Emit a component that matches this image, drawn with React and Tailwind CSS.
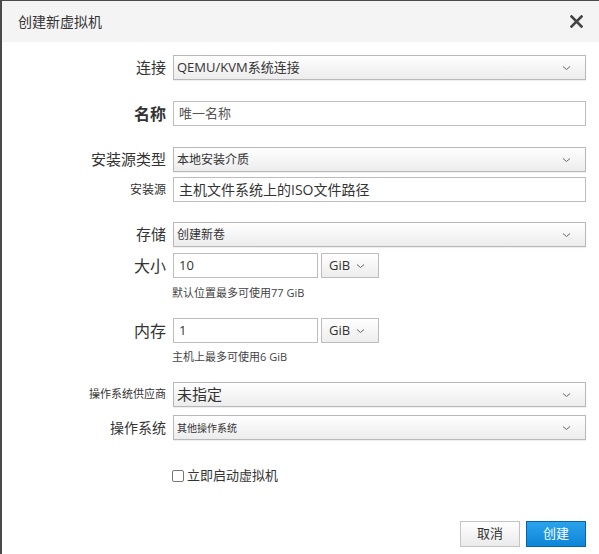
import { useState } from "react";

const font = { fontFamily: '"Open Sans", "Noto Sans CJK SC", sans-serif' };

function Chevron() {
  return (
    <svg className="w-[9px] h-[6px]" viewBox="0 0 9 6" fill="none" stroke="#666" strokeWidth="1">
      <path d="M1 1.5L4.5 4.5L8 1.5" />
    </svg>
  );
}

function Select({ children, textClass = "text-[13px]" }) {
  return (
    <div className="flex h-[25px] flex-1 items-center justify-between border border-[#b8b8b8] bg-gradient-to-b from-white to-[#ececec] pl-[3px] pr-[14px] shadow-[0_1px_1px_rgba(0,0,0,0.06)]">
      <span className={`${textClass} leading-none text-[#333]`}>{children}</span>
      <Chevron />
    </div>
  );
}

function Input({ value, className = "flex-1", textClass = "text-[13px]", muted }) {
  return (
    <div className={`flex h-[25px] items-center border border-[#bdbdbd] bg-white px-[5px] ${className}`}>
      <span className={`${textClass} leading-none ${muted ? "text-[#555]" : "text-[#333]"}`}>{value}</span>
    </div>
  );
}

function UnitButton() {
  return (
    <div className="ml-[3px] flex h-[25px] w-[58px] items-center gap-[6px] border border-[#bdbdbd] bg-gradient-to-b from-white to-[#ededed] pl-[7px]">
      <span className="text-[13px] leading-none text-[#333]">GiB</span>
      <Chevron />
    </div>
  );
}

function Row({ label, labelClass = "text-[15px]", mt, children }) {
  return (
    <div className={`flex items-center ${mt}`}>
      <div className={`w-[165px] shrink-0 pr-[1px] text-right text-[#333] ${labelClass}`}>{label}</div>
      <div className="ml-[6px] flex flex-1 items-center">{children}</div>
    </div>
  );
}

export default function App() {
  const [autostart, setAutostart] = useState(false);

  return (
    <div className="h-[554px] w-[599px] overflow-hidden border-l-2 border-t border-[#4a4a4a] bg-white" style={font}>
      <div className="flex h-[41px] items-center justify-between bg-[#f4f4f4] pl-[16px] pr-[16px]">
        <h2 className="text-[14px] text-[#333]">创建新虚拟机</h2>
        <svg className="h-[13px] w-[13px]" viewBox="0 0 13 13" stroke="#444" strokeWidth="2.6" strokeLinecap="square">
          <path d="M1.5 1.5L11.5 11.5M11.5 1.5L1.5 11.5" />
        </svg>
      </div>

      <div className="pr-[13px]">
        <Row label="连接" mt="mt-[13px]">
          <Select>QEMU/KVM系统连接</Select>
        </Row>
        <Row label="名称" labelClass="text-[16px] font-bold" mt="mt-[21px]">
          <Input value="唯一名称" muted />
        </Row>
        <Row label="安装源类型" mt="mt-[21px]">
          <Select textClass="text-[12px]">本地安装介质</Select>
        </Row>
        <Row label="安装源" labelClass="text-[12px]" mt="mt-[5px]">
          <Input value="主机文件系统上的ISO文件路径" textClass="text-[14px]" />
        </Row>
        <Row label="存储" mt="mt-[20px]">
          <Select textClass="text-[12px]">创建新卷</Select>
        </Row>
        <Row label="大小" labelClass="text-[16px]" mt="mt-[6px]">
          <Input value="10" className="w-[145px]" />
          <UnitButton />
        </Row>
        <div className="ml-[170px] mt-[7px] text-[11px] leading-[16px] text-[#444]">默认位置最多可使用77 GiB</div>
        <Row label="内存" labelClass="text-[16px]" mt="mt-[17px]">
          <Input value="1" className="w-[145px]" />
          <UnitButton />
        </Row>
        <div className="ml-[170px] mt-[6px] text-[11px] leading-[16px] text-[#444]">主机上最多可使用6 GiB</div>
        <Row label="操作系统供应商" labelClass="text-[11px]" mt="mt-[17px]">
          <Select textClass="text-[15px]">未指定</Select>
        </Row>
        <Row label="操作系统" labelClass="text-[14px]" mt="mt-[8px]">
          <Select textClass="text-[10px]">其他操作系统</Select>
        </Row>

        <label className="ml-[170px] mt-[26px] flex w-fit cursor-pointer items-center gap-[3px]">
          <input
            type="checkbox"
            checked={autostart}
            onChange={(e) => setAutostart(e.target.checked)}
            className="h-[12px] w-[12px] appearance-none rounded-[2px] border border-[#777] bg-white checked:bg-[#1a8fe0]"
          />
          <span className="text-[13px] text-[#333]">立即启动虚拟机</span>
        </label>

        <div className="mt-[35px] flex justify-end gap-[6px]">
          <button className="h-[26px] w-[60px] border border-[#c4c4c4] bg-gradient-to-b from-white to-[#eaeaea] text-[13px] text-[#333]">
            取消
          </button>
          <button className="h-[26px] w-[60px] border border-[#0b62a8] bg-gradient-to-b from-[#2aa3ec] to-[#0a85d8] text-[13px] text-white">
            创建
          </button>
        </div>
      </div>
    </div>
  );
}
